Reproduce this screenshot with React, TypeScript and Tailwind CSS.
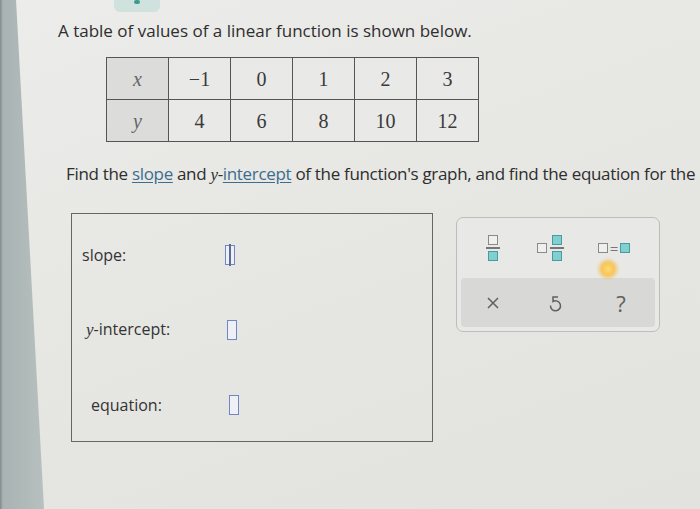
import React from "react";

const font = { fontFamily: '"Open Sans", "DejaVu Sans", sans-serif' };

function Box({ caret }: { caret?: boolean }) {
  return (
    <div className="relative h-[20px] w-[10px] border-[1.5px] border-[#7286c4] bg-[#eef0f6]">
      {caret && <div className="absolute left-[2.5px] top-[-2px] h-[22px] w-[2px] border-x border-[#5a6a9a]" />}
    </div>
  );
}

function Sq({ teal }: { teal?: boolean }) {
  return (
    <div
      className={
        "h-[10px] w-[10px] border-[1.5px] " +
        (teal ? "border-[#4a9aa0] bg-[#7fd0d0]" : "border-[#8a8a8a] bg-[#efefef]")
      }
    />
  );
}

function Frac({ topTeal }: { topTeal?: boolean }) {
  return (
    <div className="flex flex-col items-center gap-[2px]">
      <Sq teal={topTeal} />
      <div className="h-[1.5px] w-[14px] bg-[#777]" />
      <Sq teal />
    </div>
  );
}

export default function App() {
  const xs = ["x", "\u22121", "0", "1", "2", "3"];
  const ys = ["y", "4", "6", "8", "10", "12"];
  return (
    <div
      className="relative flex h-[509px] w-[700px] overflow-hidden bg-[linear-gradient(160deg,#ececea_0%,#e6e6e3_50%,#e2e2df_100%)] text-[#2e2e2e]"
      style={font}
    >
      <div className="h-full w-[44px] shrink-0 bg-[linear-gradient(90deg,#7f8a8a_0px,#a9b3b3_3px,#b7c0bf_100%)] [clip-path:polygon(0_0,16px_0,44px_100%,0_100%)]" />
      <div className="flex min-w-0 flex-1 flex-col">
        <div className="relative h-0">
          <div className="absolute left-[70px] top-[-12px] flex h-[24px] w-[46px] items-end justify-center rounded-md bg-[#cfe2de] pb-[8px]">
            <div className="h-[4px] w-[6px] rounded-full bg-[#3e9a94]" />
          </div>
        </div>
        <div className="pl-[14px] pt-[19px] text-[17px] leading-[24px]">
          A table of values of a linear function is shown below.
        </div>
        <div className="pl-[62px] pt-[14px]">
          <table
            className="border-collapse border-[1.5px] border-[#555] text-[20px] text-[#3a3a3a]"
            style={{ fontFamily: '"Liberation Serif", serif' }}
          >
            <tbody>
              {[xs, ys].map((row, r) => (
                <tr key={r} className="h-[42px]">
                  {row.map((v, i) => (
                    <td
                      key={i}
                      className={
                        "w-[62px] border-[1.5px] border-[#555] text-center " +
                        (i === 0 ? "bg-[#dcdcda] italic text-[#666]" : "bg-[#e9e9e7]")
                      }
                    >
                      {v}
                    </td>
                  ))}
                </tr>
              ))}
            </tbody>
          </table>
        </div>
        <div className="whitespace-nowrap pl-[22px] pt-[20px] text-[17px] leading-[24px] tracking-[-0.32px]">
          Find the <span className="text-[#3d6c8e] underline underline-offset-2">slope</span> and{" "}
          <span className="italic" style={{ fontFamily: '"Liberation Serif", serif' }}>
            y
          </span>
          -<span className="text-[#3d6c8e] underline underline-offset-2">intercept</span> of the function's graph,
          and find the equation for the
        </div>
        <div className="flex items-start pl-[27px] pt-[26px]">
          <div className="flex h-[229px] w-[362px] flex-col gap-[55px] border-[1.5px] border-[#666] pl-[10px] pt-[31px] text-[16px] text-[#333]">
            <div className="flex h-[20px] items-center">
              <div className="w-[143px]">slope:</div>
              <Box caret />
            </div>
            <div className="flex h-[20px] items-center pl-[4px]">
              <div className="w-[141px]">
                <span className="italic text-[17px]" style={{ fontFamily: '"Liberation Serif", serif' }}>
                  y
                </span>
                -intercept:
              </div>
              <Box />
            </div>
            <div className="flex h-[20px] items-center pl-[9px]">
              <div className="w-[138px]">equation:</div>
              <Box />
            </div>
          </div>
          <div className="relative ml-[23px] mt-[4px] flex h-[115px] w-[204px] flex-col rounded-[7px] border-[1.5px] border-[#bdbdbb] bg-[#e8e8e6] px-[4px] pb-[4px]">
            <div className="flex h-[60px] items-center">
              <div className="flex w-[64px] justify-center">
                <Frac />
              </div>
              <div className="flex w-[50px] items-center justify-center gap-[3px]">
                <Sq />
                <Frac topTeal />
              </div>
              <div className="flex w-[78px] items-center justify-center gap-[2px]">
                <Sq />
                <span className="text-[15px] leading-none text-[#777]">=</span>
                <Sq teal />
              </div>
            </div>
            <div className="flex flex-1 items-center rounded-[4px] bg-[#d8d8d6]">
              <div className="flex w-[62px] justify-center pl-[2px]">
                <svg width="14" height="14" viewBox="0 0 14 14" stroke="#606060" strokeWidth="1.5" fill="none">
                  <path d="M2 2 L12 12 M12 2 L2 12" />
                </svg>
              </div>
              <div className="flex w-[62px] justify-center pl-[2px]">
                <svg width="16" height="18" viewBox="0 0 16 18" stroke="#606060" strokeWidth="1.5" fill="none">
                  <path d="M11 3 H6 V7.5 A5 5 0 1 1 3.5 11.5" />
                </svg>
              </div>
              <div className="flex w-[66px] justify-center pl-[6px] text-[22px] leading-none text-[#606060]">?</div>
            </div>
            <div className="absolute left-[140px] top-[40px] h-[22px] w-[22px] rounded-full bg-[radial-gradient(circle,#ffe07a_0%,#f6c253_40%,rgba(246,194,83,0)_72%)] blur-[1px]" />
          </div>
        </div>
      </div>
    </div>
  );
}
